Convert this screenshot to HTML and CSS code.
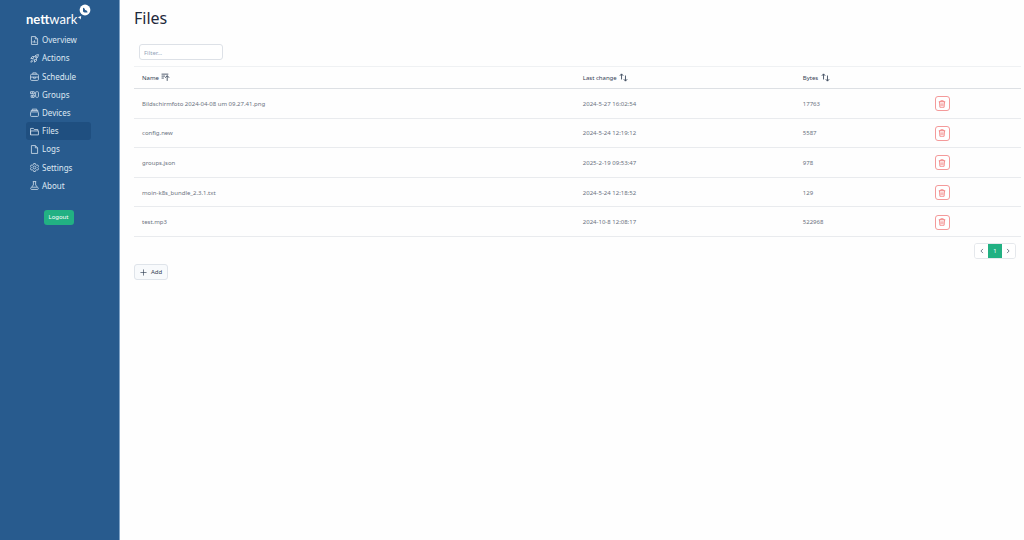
FILE: index.html
```html
<!DOCTYPE html>
<html lang="en">
<head>
<meta charset="utf-8">
<title>nettwark – Files</title>
<link rel="stylesheet" href="styles.css">
</head>
<body>
<svg class="sprite" aria-hidden="true">
  <symbol id="trash" viewBox="0 0 16 16"><path d="M1.500 3.500h13M5.500 3.500V1.500h5v2M3 3.500l.8 11h8.400l.8-11M6.200 6.500v5.500M9.800 6.500v5.500"/></symbol>
  <symbol id="sort" viewBox="0 0 16 16"><path d="M4.500 11.500V2M1.500 5l3-3.500 3 3.500M11.500 4.500V14M8.500 11l3 3.500 3-3.500"/></symbol>
</svg>
<div class="layout">
  <aside class="sidebar">
    <a class="logo" href="#"><span><b>nett</b>wark</span>
      <svg class="logo-mark" viewBox="0 0 14 18" aria-hidden="true"><circle cx="8" cy="6" r="5.400" fill="#fff"/><path d="M6 3.800v3c0 1 .5 1.700 1.700 1.700h2.800c0-1.800-1-2.500-2.500-2.600 0-1.200-.8-2-2-2.100z" fill="#285b8e"/><path d="M.8 13.200l3.400-1.200-.6 3.600-1.200-1.600z" fill="#fff"/></svg>
    </a>
    <nav class="nav">
      <a href="#"><svg class="icon" viewBox="0 0 16 16"><path d="M2.500 1h7l4 4v10h-11zM9.500 1v4h4M5.500 12V9M8 12V7.500M10.500 12v-2"/></svg>Overview</a>
      <a href="#"><svg class="icon" viewBox="0 0 16 16"><path d="M5.500 8C7 4 10 1.500 15 1c-.5 5-3 8-7 9.500zM5.500 8H1.500l2.500-3.500h3.500M8 10.500v4l3.500-2.500V8.500M4.500 10.500C2.500 11 2 12.500 1.500 14.500c2-.3 3.500-1 4-3"/><circle cx="10.800" cy="5.200" r="1.300"/></svg>Actions</a>
      <a href="#"><svg class="icon" viewBox="0 0 16 16"><rect x="1" y="4" width="14" height="11" rx="2"/><path d="M5 4V1.500h6V4M1 9h14M6 9v2h4V9"/></svg>Schedule</a>
      <a href="#"><svg class="icon" viewBox="0 0 16 16"><path d="M1 3h5M1 3v3.500h5M2 9.500h4M2 9.500V13h5"/><circle cx="6.500" cy="5" r="2"/><circle cx="6.500" cy="11" r="2"/><rect x="10" y="3" width="5" height="10" rx="1.500"/></svg>Groups</a>
      <a href="#"><svg class="icon" viewBox="0 0 16 16"><rect x="1" y="7" width="14" height="8" rx="1.500"/><path d="M2 7V4.500h12V7M4 4.500V2h8v2.500"/></svg>Devices</a>
      <a href="#" class="active" aria-current="page"><svg class="icon" viewBox="0 0 16 16"><path d="M1 14V2.500h5l1.500 2H14V7M1 14V7h14v7z"/></svg>Files</a>
      <a href="#"><svg class="icon" viewBox="0 0 16 16"><path d="M2.500 1h7l4 4v10h-11zM9.500 1v4h4"/></svg>Logs</a>
      <a href="#"><svg class="icon" viewBox="0 0 16 16"><path d="M6.500 1h3l.6 2 1.700 1 2-.5 1.500 2.600L14 7.500v1.200l1.300 1.400-1.500 2.500-2-.5-1.700 1-.6 2h-3l-.6-2-1.700-1-2 .5-1.500-2.500L2 8.700V7.500L.7 6.100l1.500-2.600 2 .5 1.700-1z"/><circle cx="8" cy="8" r="2.500"/></svg>Settings</a>
      <a href="#"><svg class="icon" viewBox="0 0 16 16"><path d="M5 1h6M6 1v6L1.500 12.500c-.8 1.200 0 2.500 1.300 2.500h10.400c1.300 0 2.100-1.300 1.300-2.500L10 7V1M3.500 11h9"/></svg>About</a>
    </nav>
    <button class="logout" type="button">Logout</button>
  </aside>
  <main class="content">
    <h1>Files</h1>
    <input class="filter" type="text" placeholder="Filter..." aria-label="Filter">
    <table class="files">
      <thead>
        <tr>
          <th class="col-name" scope="col">Name <svg class="sort" viewBox="0 0 16 16"><path d="M1 2h12M1 5.500h6M1 9h4M11 14V5M7.500 8.500L11 4.500l3.500 4"/></svg></th>
          <th class="col-date" scope="col">Last change <svg class="sort"><use href="#sort"/></svg></th>
          <th class="col-bytes" scope="col">Bytes <svg class="sort"><use href="#sort"/></svg></th>
          <th class="col-action"></th>
        </tr>
      </thead>
      <tbody>
        <tr><td>Bildschirmfoto 2024-04-08 um 09.27.41.png</td><td>2024-5-27 16:02:54</td><td>17763</td><td class="col-action"><button class="delete" type="button" aria-label="Delete"><svg><use href="#trash"/></svg></button></td></tr>
        <tr><td>config.new</td><td>2024-5-24 12:19:12</td><td>5587</td><td class="col-action"><button class="delete" type="button" aria-label="Delete"><svg><use href="#trash"/></svg></button></td></tr>
        <tr><td>groups.json</td><td>2025-2-19 09:53:47</td><td>978</td><td class="col-action"><button class="delete" type="button" aria-label="Delete"><svg><use href="#trash"/></svg></button></td></tr>
        <tr><td>moin-k8s_bundle_2.3.1.txt</td><td>2024-5-24 12:18:52</td><td>129</td><td class="col-action"><button class="delete" type="button" aria-label="Delete"><svg><use href="#trash"/></svg></button></td></tr>
        <tr><td>test.mp3</td><td>2024-10-8 12:08:17</td><td>522968</td><td class="col-action"><button class="delete" type="button" aria-label="Delete"><svg><use href="#trash"/></svg></button></td></tr>
      </tbody>
    </table>
    <div class="pager">
      <button type="button" aria-label="Previous page"><svg viewBox="0 0 16 16"><path d="M10.500 2.500L5 8l5.500 5.500"/></svg></button>
      <button type="button" class="current" aria-current="page">1</button>
      <button type="button" aria-label="Next page"><svg viewBox="0 0 16 16"><path d="M5.500 2.500L11 8l-5.500 5.500"/></svg></button>
    </div>
    <button class="add" type="button"><svg viewBox="0 0 16 16"><path d="M8 1v14M1 8h14"/></svg>Add</button>
  </main>
</div>
</body>
</html>
```
FILE: styles.css
```css
* { box-sizing: border-box; }
body { margin: 0; font-family: "Noto Sans", "Open Sans", sans-serif; color: #334155; background: #fefefe; }
button, input { font-family: inherit; }
button { cursor: pointer; }
svg { fill: none; stroke: currentColor; stroke-width: 1.5; }
.sprite { display: none; }
.layout { display: flex; min-height: 100vh; }
.sidebar {
  flex: 0 0 120px;
  padding: 3px 28px 0 26px;
  background: #285b8e;
  border-right: 1px solid #7fa3c7;
  color: #dfe8f2;
}
.logo {
  display: flex;
  position: relative;
  height: 28px;
  padding-top: 8px;
  color: #fff;
  font-family: Lato, sans-serif;
  font-size: 13px;
  line-height: 16px;
  text-decoration: none;
}
.logo-mark { position: absolute; left: 51px; top: 1px; width: 14px; height: 18px; stroke: none; }
.nav { display: grid; min-height: 164px; }
.nav a {
  display: flex;
  align-items: center;
  gap: 3px;
  padding: 0 4px;
  border-radius: 3px;
  color: inherit;
  font-size: 8px;
  line-height: 16px;
  text-decoration: none;
}
.nav .active { background: #1f4f80; }
.icon { width: 9px; height: 9px; opacity: 0.9; }
.logout {
  display: block;
  margin: 15px auto 0;
  width: 30px;
  height: 15px;
  padding: 0;
  border: 0;
  border-radius: 3px;
  background: #22b183;
  color: #fff;
  font-size: 6px;
  line-height: 15px;
}
.content { flex: 1; min-width: 0; padding: 6px 3px 0 14px; }
h1 { margin: 0; font-size: 16px; line-height: 24px; font-weight: 400; color: #1e293b; }
.filter {
  display: block;
  width: 84px;
  height: 16px;
  margin: 14px 0 6px 5px;
  padding: 1px 4px 0;
  border: 1px solid #dde1e7;
  border-radius: 3px;
  background: #fff;
  color: #64748b;
  font-size: 6px;
}
.filter::placeholder { color: #94a3b8; }
.files { width: 100%; height: 171px; border-collapse: collapse; table-layout: fixed; border-top: 1px solid #eff1f3; }
.files th, .files td { padding: 1px 8px 0; font-size: 6px; line-height: 12px; text-align: left; vertical-align: middle; }
.files th { height: 22px; padding-top: 0; font-weight: 400; color: #334155; border-bottom: 1px solid #dde0e4; }
.files td { color: #6b7280; border-bottom: 1px solid #e9ebee; }
.files .col-action { padding-left: 7px; }
.col-name { width: 49.7%; }
.col-date { width: 24.8%; }
.col-bytes { width: 15%; }
.sort { width: 9px; height: 9px; margin-left: 1px; vertical-align: middle; }
.delete {
  display: grid;
  place-items: center;
  width: 15px;
  height: 15px;
  padding: 0;
  border: 1px solid #f49a9a;
  border-radius: 3px;
  background: #fff;
  color: #ef6b6b;
}
.delete svg { width: 8px; height: 8px; }
.pager {
  display: flex;
  width: 42px;
  height: 16px;
  margin: 6px 5px 5px auto;
  border: 1px solid #e5e8ec;
  border-radius: 3px;
  overflow: hidden;
}
.pager button {
  display: grid;
  flex: 1;
  place-items: center;
  padding: 0;
  border: 0;
  background: #fff;
  color: #475569;
  font-size: 6px;
}
.pager .current { background: #22b183; color: #fff; }
.pager svg { width: 6px; height: 6px; stroke-width: 2; }
.add {
  display: flex;
  align-items: center;
  gap: 4px;
  height: 16px;
  padding: 0 5px;
  border: 1px solid #dfe4ea;
  border-radius: 3px;
  background: #f8fafc;
  color: #334155;
  font-size: 6px;
}
.add svg { width: 7px; height: 7px; }
```
